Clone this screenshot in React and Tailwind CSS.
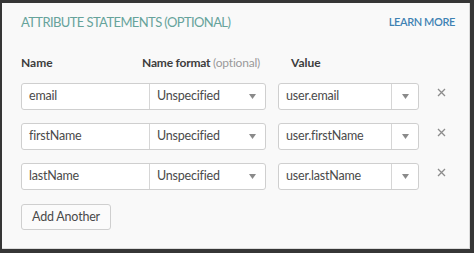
import React from "react";

const rows = [
  { name: "email", value: "user.email" },
  { name: "firstName", value: "user.firstName" },
  { name: "lastName", value: "user.lastName" },
];

function Caret() {
  return (
    <svg width="7" height="5" viewBox="0 0 7 5" className="text-[#8a8a8a]">
      <path d="M0 0h7L3.5 5z" fill="currentColor" />
    </svg>
  );
}

export default function App() {
  return (
    <div
      className="w-[474px] h-[253px] bg-[#363636] pt-[3px] pl-[2px] pr-[4px] pb-[4px]"
      style={{ fontFamily: "Lato, 'Open Sans', sans-serif" }}
    >
      <div className="h-full bg-[#f9f9f9] border-r border-b border-[#dcdcdc] pl-[19px] pr-[14px] pt-[11px]">
        {/* title */}
        <div className="flex items-center justify-between leading-[16px]">
          <span className="text-[13px] text-[#66a39b] tracking-[-0.6px]">
            ATTRIBUTE STATEMENTS (OPTIONAL)
          </span>
          <a href="#" className="text-[11px] font-semibold text-[#3f82b3] tracking-[-0.4px]">
            LEARN MORE
          </a>
        </div>

        {/* headers */}
        <div className="flex mt-[25px] leading-[16px] text-[12px] font-bold text-[#3d3d3d]">
          <div className="w-[121px]">Name</div>
          <div className="w-[149px] tracking-[-0.2px]">
            Name format <span className="font-normal text-[#9a9a9a]">(optional)</span>
          </div>
          <div>Value</div>
        </div>

        {/* rows */}
        <div className="flex flex-col gap-[13px] mt-[12px]">
          {rows.map((r) => (
            <div key={r.name} className="flex items-center h-[27px] text-[12.5px] tracking-[-0.2px] text-[#4a4a4a]">
              <div className="flex h-full w-[245px] border border-[#cfcfcf] rounded-[3px] bg-white">
                <div className="w-[128px] h-full flex items-center pl-[7px] border-r border-[#d6d6d6]">
                  {r.name}
                </div>
                <div className="flex-1 h-full flex items-center justify-between pl-[7px] pr-[9px]">
                  <span>Unspecified</span>
                  <Caret />
                </div>
              </div>
              <div className="ml-[12px] flex h-full w-[141px] border border-[#cfcfcf] rounded-[3px] bg-white">
                <div className="flex-1 h-full flex items-center pl-[7px] border-r border-[#d6d6d6]">
                  {r.value}
                </div>
                <div className="w-[26px] h-full flex items-center justify-center">
                  <Caret />
                </div>
              </div>
              <div className="ml-[18px] -mt-[8px] text-[#8c8c8c]">
                <svg width="9" height="9" viewBox="0 0 9 9">
                  <path d="M1 1l7 7M8 1L1 8" stroke="currentColor" strokeWidth="1.3" />
                </svg>
              </div>
            </div>
          ))}
        </div>

        <button className="mt-[14px] h-[26px] w-[90px] border border-[#cfcfcf] rounded-[3px] bg-[#fbfbfb] text-[12.5px] tracking-[-0.2px] text-[#4a4a4a]">
          Add Another
        </button>
      </div>
    </div>
  );
}
